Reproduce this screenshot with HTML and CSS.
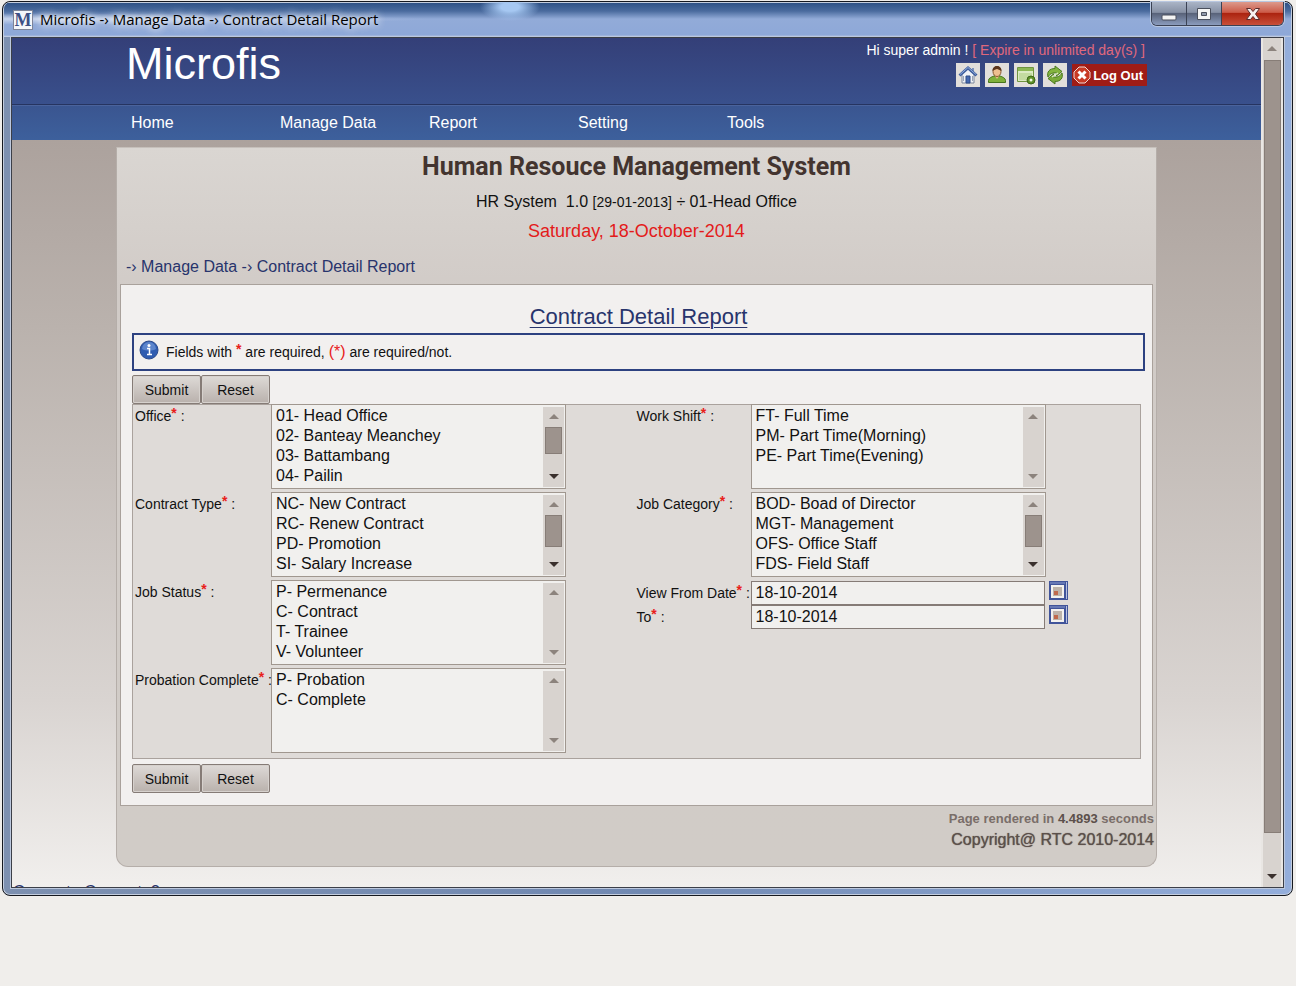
FILE: index.html
```html
<!DOCTYPE html>
<html lang="en">
<head>
    <meta charset="UTF-8">
    <meta name="viewport" content="width=device-width, initial-scale=1.0">
    <title>Microfis -› Manage Data -› Contract Detail Report</title>
    <link rel="stylesheet" href="styles.css">
</head>
<body>
    <div class="window">
        <div class="titlebar">
            <span class="app-icon">M</span>
            <span class="window-title">Microfis -› Manage Data -› Contract Detail Report</span>
            <div class="window-buttons">
                <button type="button" class="win-btn win-min" aria-label="Minimize">
                    <svg width="16" height="16" viewBox="0 0 16 16"><rect x="1" y="9" width="14" height="5" rx="1" fill="#f4f4f4" stroke="#4a4f5c"/></svg>
                </button>
                <button type="button" class="win-btn win-max" aria-label="Maximize">
                    <svg width="16" height="16" viewBox="0 0 16 16"><path d="M1.500 2.500h13v11h-13z" fill="#f4f4f4" stroke="#4a4f5c"/><path d="M5.500 6.500h5v3h-5z" fill="#8f98aa" stroke="#4a4f5c"/></svg>
                </button>
                <button type="button" class="win-btn win-close" aria-label="Close">
                    <svg width="16" height="16" viewBox="0 0 16 16"><path d="M1.500 2.500h4L8 5.500l2.500-3h4L10.500 8l4 5.500h-4L8 10.500l-2.500 3h-4l4-5.500z" fill="#f6f1f0" stroke="#5a2c2c"/></svg>
                </button>
            </div>
        </div>

        <div class="client">
            <div class="page">
                <header class="header">
                    <div class="container header-inner">
                        <div class="logo">Microfis</div>
                        <div class="user-box">
                            <div class="greeting">Hi super admin ! <span class="expire">[ Expire in unlimited day(s) ]</span></div>
                            <div class="user-tools">
                                <a href="#" class="tool" aria-label="Home">
                                    <svg width="20" height="20" viewBox="0 0 20 20">
                                        <path d="M14 3h2v5h-2z" fill="#8095bd"/>
                                        <path d="M4 9l6-5 6 5v9H4z" fill="#eef1f6" stroke="#7b869c"/>
                                        <path d="M1.500 10.500L10 3l8.500 7.500" fill="none" stroke="#3f5f9f" stroke-width="3"/>
                                        <path d="M2 9.500L10 2.500l8 7" fill="none" stroke="#8fabdc"/>
                                        <path d="M8 11h4v7H8z" fill="#4468b0" stroke="#2d4a86"/>
                                        <path d="M5.500 11v5M14.500 11v5" stroke="#98a3b6"/>
                                    </svg>
                                </a>
                                <a href="#" class="tool" aria-label="User">
                                    <svg width="20" height="20" viewBox="0 0 20 20">
                                        <path d="M1.500 17.500v-2c0-2.500 3-3.500 5.500-4.500h6c2.500 1 5.500 2 5.500 4.500v2z" fill="#7fb03a" stroke="#47751c"/>
                                        <path d="M7.500 10.500h5L10 14z" fill="#e9b98a"/>
                                        <ellipse cx="10" cy="6.500" rx="4" ry="5" fill="#eebf8f" stroke="#8a5a30"/>
                                        <path d="M5.500 6C5.500 2.500 7.500 1 10 1s4.500 1.500 4.500 5C12.500 5 11 4 10 4S7 5 5.500 6z" fill="#5a351c"/>
                                    </svg>
                                </a>
                                <a href="#" class="tool" aria-label="New window">
                                    <svg width="20" height="20" viewBox="0 0 20 20">
                                        <path d="M1.500 2.500h16v14h-16z" fill="#dceac4" stroke="#6f9440"/>
                                        <path d="M2 3h15v3H2z" fill="#8db855"/>
                                        <path d="M3 8h13v7H3z" fill="#c3dba0"/>
                                        <circle cx="15" cy="15" r="4" fill="#5e9127" stroke="#3c6517"/>
                                        <circle cx="15" cy="15" r="1.500" fill="#f3f8ea"/>
                                    </svg>
                                </a>
                                <a href="#" class="tool" aria-label="Refresh">
                                    <svg width="20" height="20" viewBox="0 0 20 20">
                                        <path d="M3 12C1.500 7 4.500 3.500 10 3.500V1l7 5.500-5.500 4.500V8C8 7.500 5 8.500 3 12z" fill="#84b440" stroke="#4c7a20"/>
                                        <path d="M17 8c1.500 5-1.500 8.500-7 8.500V19l-7-5.500L8.500 9v3c3.500.5 6.500-.5 8.500-4z" fill="#7aab38" stroke="#4c7a20"/>
                                        <path d="M7 12l6-4" stroke="#dceac4" stroke-width="1.500"/>
                                    </svg>
                                </a>
                                <button type="button" class="logout">
                                    <svg width="18" height="18" viewBox="0 0 18 18">
                                        <path d="M6 1h6l5 5v6l-5 5H6l-5-5V6z" fill="#c93a25" stroke="#f1d9d4"/>
                                        <path d="M5.500 5.500l7 7M12.500 5.500l-7 7" stroke="#fff" stroke-width="3"/>
                                    </svg>
                                    Log Out
                                </button>
                            </div>
                        </div>
                    </div>
                </header>

                <nav class="nav">
                    <div class="container nav-inner">
                        <a href="#">Home</a>
                        <a href="#">Manage Data</a>
                        <a href="#">Report</a>
                        <a href="#">Setting</a>
                        <a href="#">Tools</a>
                    </div>
                </nav>

                <div class="content">
                    <div class="container panel">
                        <div class="system-info">
                            <h1>Human Resouce Management System</h1>
                            <p class="version">HR System&nbsp; 1.0 <small>[29-01-2013]</small> ÷ 01-Head Office</p>
                            <p class="today">Saturday, 18-October-2014</p>
                        </div>
                        <div class="breadcrumb">-› <a href="#">Manage Data</a> -› <a href="#">Contract Detail Report</a></div>

                        <div class="report">
                            <h2>Contract Detail Report</h2>
                            <div class="notice">
                                <svg width="20" height="20" viewBox="0 0 20 20">
                                    <circle cx="10" cy="10" r="9" fill="#2f5cb0" stroke="#2a4a8c"/>
                                    <path d="M3 9a7 7 0 0 1 14 0c-4 2-10 2-14 0z" fill="#5c85cc"/>
                                    <path d="M8 8.500h2.500v6M8 14.500h5" fill="none" stroke="#fff" stroke-width="1.500"/>
                                    <circle cx="10" cy="5.500" r="1.500" fill="#fff"/>
                                </svg>
                                <span>Fields with <b class="req">*</b> are required, <span class="req-opt">(*)</span> are required/not.</span>
                            </div>

                            <form>
                                <div class="buttons">
                                    <button type="submit" class="button">Submit</button>
                                    <button type="reset" class="button">Reset</button>
                                </div>

                                <div class="fields">
                                    <div class="column left">
                                        <div class="field">
                                            <label for="office">Office<b class="req">*</b> :</label>
                                            <div class="listbox">
                                                <select id="office" multiple size="4">
                                                    <option>01- Head Office</option>
                                                    <option>02- Banteay Meanchey</option>
                                                    <option>03- Battambang</option>
                                                    <option>04- Pailin</option>
                                                </select>
                                                <div class="scroll active"><i class="up"></i><i class="thumb"></i><i class="down"></i></div>
                                            </div>
                                        </div>
                                        <div class="field">
                                            <label for="contractType">Contract Type<b class="req">*</b> :</label>
                                            <div class="listbox">
                                                <select id="contractType" multiple size="4">
                                                    <option>NC- New Contract</option>
                                                    <option>RC- Renew Contract</option>
                                                    <option>PD- Promotion</option>
                                                    <option>SI- Salary Increase</option>
                                                </select>
                                                <div class="scroll active"><i class="up"></i><i class="thumb long"></i><i class="down"></i></div>
                                            </div>
                                        </div>
                                        <div class="field">
                                            <label for="jobStatus">Job Status<b class="req">*</b> :</label>
                                            <div class="listbox">
                                                <select id="jobStatus" multiple size="4">
                                                    <option>P- Permenance</option>
                                                    <option>C- Contract</option>
                                                    <option>T- Trainee</option>
                                                    <option>V- Volunteer</option>
                                                </select>
                                                <div class="scroll"><i class="up"></i><i class="down"></i></div>
                                            </div>
                                        </div>
                                        <div class="field">
                                            <label for="probation">Probation Complete<b class="req">*</b> :</label>
                                            <div class="listbox">
                                                <select id="probation" multiple size="4">
                                                    <option>P- Probation</option>
                                                    <option>C- Complete</option>
                                                </select>
                                                <div class="scroll"><i class="up"></i><i class="down"></i></div>
                                            </div>
                                        </div>
                                    </div>

                                    <div class="column right">
                                        <div class="field">
                                            <label for="workShift">Work Shift<b class="req">*</b> :</label>
                                            <div class="listbox">
                                                <select id="workShift" multiple size="4">
                                                    <option>FT- Full Time</option>
                                                    <option>PM- Part Time(Morning)</option>
                                                    <option>PE- Part Time(Evening)</option>
                                                </select>
                                                <div class="scroll"><i class="up"></i><i class="down"></i></div>
                                            </div>
                                        </div>
                                        <div class="field">
                                            <label for="jobCategory">Job Category<b class="req">*</b> :</label>
                                            <div class="listbox">
                                                <select id="jobCategory" multiple size="4">
                                                    <option>BOD- Boad of Director</option>
                                                    <option>MGT- Management</option>
                                                    <option>OFS- Office Staff</option>
                                                    <option>FDS- Field Staff</option>
                                                </select>
                                                <div class="scroll active"><i class="up"></i><i class="thumb long"></i><i class="down"></i></div>
                                            </div>
                                        </div>
                                        <div class="dates">
                                            <div class="field">
                                                <label for="fromDate">View From Date<b class="req">*</b> :</label>
                                                <input type="text" id="fromDate" value="18-10-2014">
                                                <button type="button" class="calendar" aria-label="Pick from date">
                                                    <svg width="20" height="20" viewBox="0 0 20 20">
                                                        <path d="M0 0h19v19H0z" fill="#41549a"/>
                                                        <path d="M1 1h15v2H1z" fill="#6678b4"/>
                                                        <path d="M2 4h13v13H2z" fill="#f3f1ee"/>
                                                        <path d="M4 6h9v9H4z" fill="#bdb3aa"/>
                                                        <path d="M5 10h4v4H5z" fill="#c0694c"/>
                                                        <path d="M17 1h1v17h-1z" fill="#b9c2e0"/>
                                                    </svg>
                                                </button>
                                            </div>
                                            <div class="field">
                                                <label for="toDate">To<b class="req">*</b> :</label>
                                                <input type="text" id="toDate" value="18-10-2014">
                                                <button type="button" class="calendar" aria-label="Pick to date">
                                                    <svg width="20" height="20" viewBox="0 0 20 20">
                                                        <path d="M0 0h19v19H0z" fill="#41549a"/>
                                                        <path d="M1 1h15v2H1z" fill="#6678b4"/>
                                                        <path d="M2 4h13v13H2z" fill="#f3f1ee"/>
                                                        <path d="M4 6h9v9H4z" fill="#bdb3aa"/>
                                                        <path d="M5 10h4v4H5z" fill="#c0694c"/>
                                                        <path d="M17 1h1v17h-1z" fill="#b9c2e0"/>
                                                    </svg>
                                                </button>
                                            </div>
                                        </div>
                                    </div>
                                </div>

                                <div class="buttons">
                                    <button type="submit" class="button">Submit</button>
                                    <button type="reset" class="button">Reset</button>
                                </div>
                            </form>
                        </div>

                        <footer class="footer">
                            <p class="rendered">Page rendered in <b>4.4893</b> seconds</p>
                            <p class="copyright">Copyright@ RTC 2010-2014</p>
                        </footer>
                    </div>
                    <a href="#" class="more-link">Generate Generate?</a>
                </div>
            </div>

            <!-- Main scrollbar -->
            <div class="page-scroll">
                <i class="up"></i>
                <i class="thumb"></i>
                <i class="down"></i>
            </div>
        </div>
    </div>
</body>
</html>
```

FILE: styles.css
```css
* {
    box-sizing: border-box;
}

body {
    margin: 0;
    font-family: "Liberation Sans", Arial, sans-serif;
    font-size: 16px;
    color: #111;
    background-color: #f0eeeb;
}

h1, h2, p {
    margin: 0;
    font-weight: normal;
}

a {
    color: #28346c;
    text-decoration: none;
}

button, select, input {
    font-family: inherit;
    margin: 0;
}

/* Window frame */
.window {
    margin: 1px 3px 0 2px;
    padding: 0 8px 7px;
    border: 1px solid #15181f;
    border-radius: 8px;
    background: linear-gradient(to right, #7d90b0, #7189b2 50%, #94aedb);
    box-shadow: inset 0 0 0 1px #c4cddd;
}

.titlebar {
    display: flex;
    align-items: center;
    height: 35px;
    margin: 0 -7px;
    padding-left: 9px;
    border-radius: 7px 7px 0 0;
    background:
        radial-gradient(ellipse at 26px 17px, rgba(235, 240, 250, 0.6), rgba(235, 240, 250, 0) 400px),
        radial-gradient(ellipse 30px 14px at 506px 5px, #a6c8f2 30%, rgba(166, 200, 242, 0)),
        linear-gradient(to bottom, #c4cddd 1px, #2f5286 1px, #4a6b9e 9px, #92abd8 17px, #8ea8d8 33px, #ccd5e6 35px);
}

.app-icon {
    width: 20px;
    height: 20px;
    border: 1px solid #7d8498;
    background-color: #f4f6fa;
    color: #3d4f85;
    font: bold 18px/18px "Liberation Serif", serif;
    text-align: center;
}

.window-title {
    flex: 1;
    margin-left: 7px;
    padding-bottom: 2px;
    font-family: "Open Sans", "Noto Sans", sans-serif;
    font-size: 15px;
    line-height: 20px;
    color: #000;
    text-shadow: 0 0 8px #fff, 0 0 8px #fff;
}

.window-buttons {
    display: flex;
    align-self: flex-start;
    height: 24px;
    margin-right: 7px;
    border: 1px solid #3b4254;
    border-top: none;
    border-radius: 0 0 6px 6px;
    box-shadow: 0 0 0 1px #b9c7e0;
    overflow: hidden;
}

.win-btn {
    display: flex;
    align-items: center;
    justify-content: center;
    width: 35px;
    padding: 0;
    border: none;
    border-right: 1px solid #3b4254;
    background: linear-gradient(to bottom, #aab4c6, #8791a5 45%, #59637a 50%, #8b9cbd);
}

.win-close {
    width: 61px;
    border-right: none;
    background: linear-gradient(to bottom, #dc9a8c, #cc5b48 45%, #ac2410 50%, #c94f38);
}

.client {
    display: flex;
    border: 1px solid #3c3f48;
    box-shadow: 0 0 0 1px #bcc8de;
}

.page {
    flex: 1;
}

.container {
    width: calc(100% - 208px);
    margin: 0 auto;
}

/* Header */
.header {
    height: 66px;
    background: linear-gradient(to bottom, #343f78, #39508c);
}

.header-inner {
    display: flex;
    justify-content: space-between;
    padding: 0 10px;
}

.logo {
    font-size: 45px;
    line-height: 52px;
    color: #fff;
}

.user-box {
    padding-top: 3px;
}

.greeting {
    padding-right: 2px;
    font-size: 14px;
    line-height: 18px;
    color: #fff;
    text-align: right;
}

.expire {
    color: #e0687c;
}

.user-tools {
    display: flex;
    justify-content: flex-end;
    gap: 5px;
    margin-top: 4px;
}

.tool {
    display: flex;
    align-items: center;
    justify-content: center;
    width: 24px;
    height: 24px;
    background-color: #e2dfdb;
}

.logout {
    display: flex;
    align-items: center;
    gap: 2px;
    height: 22px;
    margin-top: 1px;
    padding: 0 4px 0 1px;
    border: none;
    background-color: #9f1c16;
    color: #fff;
    font-size: 13px;
    font-weight: bold;
}

.nav {
    border-top: 1px solid #263460;
    background: linear-gradient(to bottom, #3a5590, #3d609c);
    box-shadow: inset 0 1px 0 #4a639c;
}

.nav-inner {
    display: flex;
    padding-left: 15px;
}

.nav a {
    width: 149px;
    line-height: 35px;
    color: #fff;
}

/* Content */
.content {
    padding-top: 7px;
    background: linear-gradient(to bottom, #aca29d, #bab2ad 25%, #d9d4d1 75%, #f1efed);
}

.panel {
    padding: 0 3px;
    border: 1px solid #b5aea9;
    border-top-color: #c6c0bb;
    border-radius: 0 0 12px 12px;
    background: linear-gradient(to bottom, #dad6d2, #d1cbc7 20%, #d1ccc7);
}

.system-info {
    text-align: center;
}

.system-info h1 {
    font-family: Roboto, "Liberation Sans", sans-serif;
    font-size: 25px;
    font-weight: bold;
    line-height: 38px;
    color: #43342f;
}

.version {
    line-height: 32px;
}

.version small {
    font-size: 14px;
}

.today {
    font-size: 18px;
    line-height: 26px;
    color: #e31b1b;
}

.breadcrumb {
    padding: 7px 6px 1px;
    line-height: 32px;
    color: #28346c;
}

.report {
    padding: 15px 7px 12px 11px;
    border: 1px solid #a9a19b;
    background-color: #f2f0ef;
}

.report h2 {
    font-size: 22px;
    line-height: 33px;
    text-align: center;
    color: #28346c;
    text-decoration: underline;
    text-decoration-thickness: 1px;
    text-underline-offset: 3px;
}

.notice {
    display: flex;
    align-items: center;
    gap: 7px;
    height: 38px;
    margin-bottom: 4px;
    padding: 0 5px;
    border: 2px solid #2d4180;
    font-size: 14px;
}

.notice svg {
    margin-bottom: 4px;
}

.req {
    font-size: 14px;
    font-weight: bold;
    line-height: 1px;
    vertical-align: 3px;
    color: #e8201a;
}

.req-opt {
    font-size: 16px;
    color: #e8201a;
}

.buttons {
    display: flex;
}

.button {
    width: 69px;
    height: 29px;
    padding: 0;
    border: 1px solid #857b76;
    border-radius: 2px;
    background: linear-gradient(to bottom, #dedad7, #b9b1ac);
    box-shadow: inset 0 0 0 1px #d6d1cd;
    font-size: 14px;
    color: #111;
}

.fields {
    display: flex;
    margin: 0 4px 5px 0;
    border: 1px solid #aaa29d;
    background-color: #dfdbd8;
    padding-bottom: 2px;
}

.column {
    flex: 1;
    margin-top: -1px;
}

.column.left {
    flex: none;
    width: calc(50% - 2px);
}

.field {
    display: flex;
    margin-bottom: 3px;
}

.field label {
    padding-left: 2px;
    font-size: 14px;
    line-height: 24px;
    white-space: nowrap;
}

.left label {
    width: 138px;
}

.right label {
    width: 116px;
}

.listbox {
    display: flex;
    width: 295px;
    height: 85px;
    padding: 2px 1px 1px;
    border: 1px solid #a0978f;
    background-color: #f1f0ee;
}

.listbox select {
    flex: 1;
    height: 80px;
    padding: 0;
    border: none;
    outline: none;
    overflow: hidden;
    background: none;
    font-size: 16px;
    color: #111;
}

.listbox option {
    height: 20px;
    min-height: 20px;
    padding: 0 3px;
    line-height: 20px;
}

.scroll {
    display: flex;
    flex-direction: column;
    align-items: center;
    width: 21px;
    background-color: #d8d3cf;
}

.up, .down {
    border: 5px solid transparent;
}

.up {
    margin: 2px 0 8px;
    border-bottom-color: #8c837d;
}

.down {
    margin: auto 0 3px;
    border-top-color: #8c837d;
}

.scroll.active .down {
    border-top-color: #3a302d;
}

.thumb {
    width: 17px;
    height: 27px;
    border: 1px solid #877d77;
    background-color: #9d938d;
}

.thumb.long {
    height: 32px;
}

.dates {
    padding-top: 1px;
}

.dates .field {
    margin-bottom: 0;
}

.dates input {
    width: 294px;
    height: 24px;
    padding: 0 4px;
    border: 1px solid #857b76;
    border-radius: 0;
    background-color: #f1f0ee;
    font-size: 16px;
    color: #111;
}

.calendar {
    display: flex;
    height: 20px;
    margin-left: 4px;
    padding: 0;
    border: none;
    background: none;
}

.footer {
    display: flex;
    flex-direction: column;
    align-items: flex-end;
    height: 60px;
    padding-top: 3px;
    margin-right: -1px;
    color: #5c504b;
}

.rendered {
    font-size: 13px;
    font-weight: bold;
    line-height: 20px;
    color: #7a6e69;
}

.rendered b {
    color: #5c504b;
}

.copyright {
    line-height: 22px;
    text-shadow: 0 0 1px #5c504b;
}

/* Only the top edge shows above the end of the visible area */
.more-link {
    display: block;
    height: 4px;
    margin-top: 16px;
    padding-left: 1px;
    line-height: 18px;
    overflow: hidden;
}

/* Main scrollbar */
.page-scroll {
    display: flex;
    flex-direction: column;
    align-items: center;
    width: 22px;
    border-left: 2px solid #e9e6e3;
    border-right: 2px solid #e9e6e3;
    background-color: #d8d3cf;
}

.page-scroll .up {
    margin: 3px 0 9px;
}

.page-scroll .thumb {
    flex: 1;
}

.page-scroll .down {
    margin: 41px 0 3px;
    border-top-color: #3a302d;
}
```
